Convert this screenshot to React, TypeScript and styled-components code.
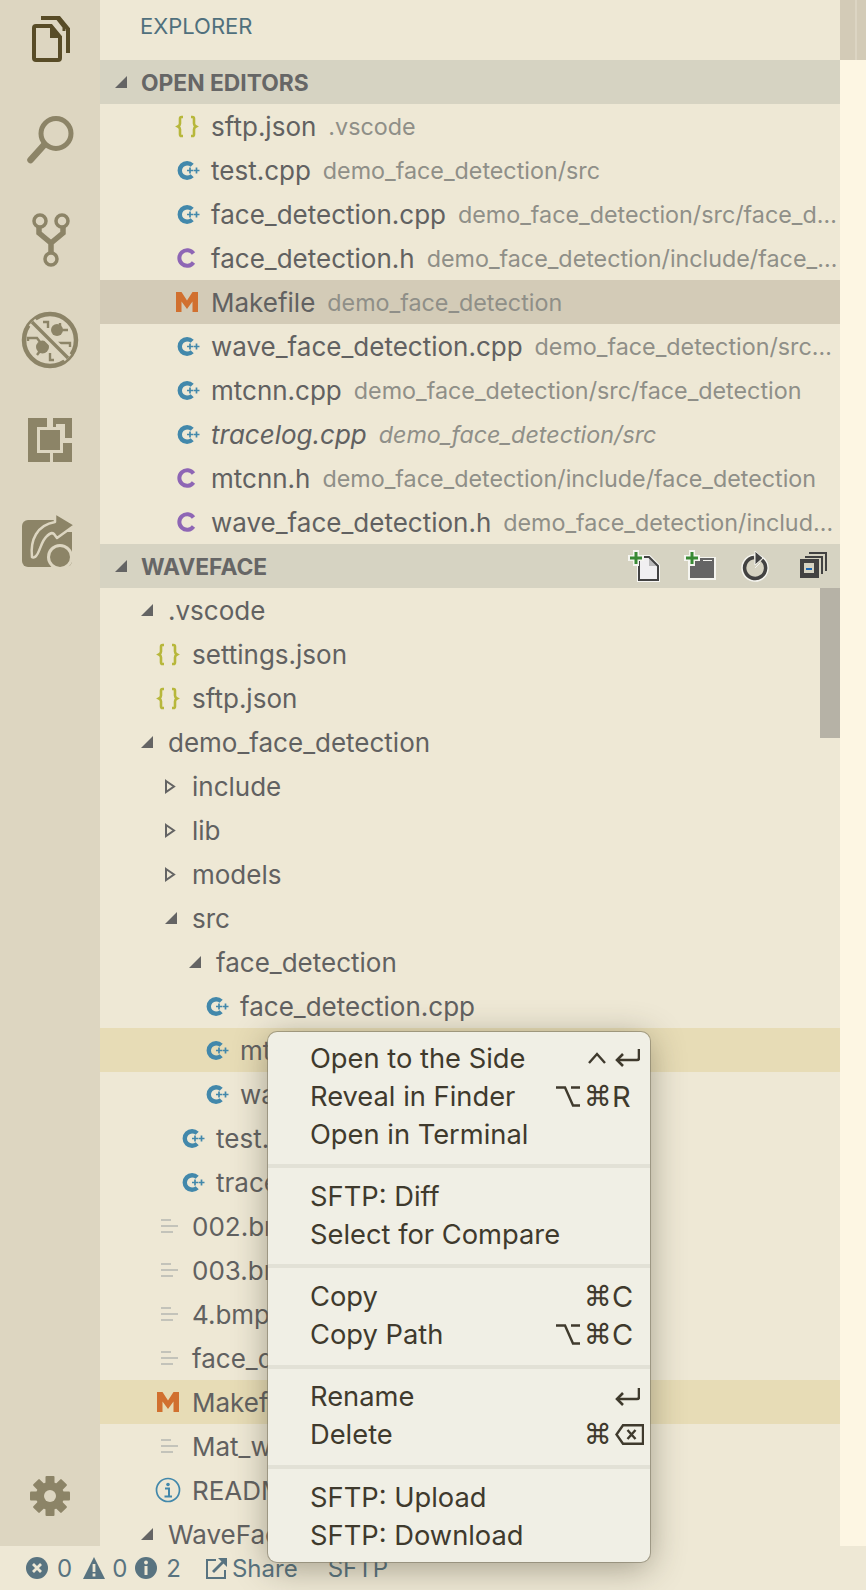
import React from "react";
import styled, { createGlobalStyle } from "styled-components";

const GlobalStyle = createGlobalStyle`
  html, body {
    margin: 0;
    padding: 0;
    background: #fdf6e3;
  }
  body {
    overflow: hidden;
    font-family: Inter, "Liberation Sans", sans-serif;
  }
`;

const Window = styled.div`
  position: relative;
  width: 866px;
  height: 1590px;
  display: flex;
  flex-direction: column;
  overflow: hidden;
`;

const Main = styled.div`
  flex: 1;
  min-height: 0;
  display: flex;
`;

const ActivityBar = styled.nav`
  width: 100px;
  flex-shrink: 0;
  background: #ddd6c1;
  display: flex;
  flex-direction: column;
  align-items: center;
  gap: 20px;
  padding-bottom: 10px;
`;

const ActivityItem = styled.div`
  height: 80px;
  width: 80px;
  svg {
    display: block;
  }
`;

const Spacer = styled.div`
  flex: 1;
`;

const Sidebar = styled.aside`
  position: relative;
  width: 740px;
  flex-shrink: 0;
  background: #eee8d5;
  display: flex;
  flex-direction: column;
  overflow: hidden;
`;

const SidebarTitle = styled.div`
  height: 52px;
  padding: 0 0 8px 40px;
  display: flex;
  align-items: center;
  font-size: 22px;
  color: #50707d;
`;

const SectionHeader = styled.div`
  height: 44px;
  flex-shrink: 0;
  background: #d6d3c2;
  display: flex;
  align-items: center;
  color: #666666;
  font-size: 22.8px;
  font-weight: 700;
  svg {
    flex-shrink: 0;
  }
`;

const SectionName = styled.span`
  flex: 1;
`;

const HeaderAction = styled.div`
  width: 56px;
  height: 44px;
  svg {
    display: block;
  }
`;

const TreeList = styled.div`
  flex: 1;
  min-height: 0;
  overflow: hidden;
`;

const TreeRow = styled.div<{ $indent: number; $tone?: "selected" | "focus" }>`
  height: 44px;
  padding-left: ${(p) => p.$indent}px;
  display: flex;
  align-items: center;
  background: ${(p) =>
    p.$tone === "selected" ? "#d3cbb7" : p.$tone === "focus" ? "#e7dcb6" : "transparent"};
  color: #616161;
  font-size: 26px;
  white-space: nowrap;
`;

const IconSlot = styled.div`
  width: 24px;
  height: 24px;
  flex-shrink: 0;
  margin-right: 12px;
  svg {
    display: block;
    overflow: visible;
  }
`;

const FileName = styled.span<{ $italic?: boolean }>`
  flex-shrink: 0;
  font-style: ${(p) => (p.$italic ? "italic" : "normal")};
`;

const FileDesc = styled.span<{ $italic?: boolean }>`
  margin-left: 12px;
  margin-right: 1px;
  min-width: 0;
  overflow: hidden;
  text-overflow: ellipsis;
  font-size: 23.3px;
  color: #8f8f88;
  font-style: ${(p) => (p.$italic ? "italic" : "normal")};
`;

const Scrollbar = styled.div`
  position: absolute;
  right: 0;
  top: 588px;
  width: 20px;
  height: 150px;
  background: #b6b2a6;
`;

const EditorColumn = styled.div`
  flex: 1;
  background: #fdf6e3;
`;

const TabStrip = styled.div`
  height: 60px;
  background: #d3cbb7;
  display: flex;
  justify-content: flex-end;
  padding-right: 9px;
`;

const TabDivider = styled.div`
  width: 2px;
  background: #dcd5c3;
`;

const StatusBar = styled.footer`
  height: 44px;
  flex-shrink: 0;
  background: #eee8d5;
  display: flex;
  align-items: center;
  padding-left: 26px;
  color: #587380;
  font-size: 24px;
`;

const StatusGroup = styled.div<{ $gap: number; $left?: number }>`
  display: flex;
  align-items: center;
  gap: ${(p) => p.$gap}px;
  margin-left: ${(p) => p.$left ?? 0}px;
  svg {
    display: block;
  }
`;

const ContextMenu = styled.div`
  position: absolute;
  left: 268px;
  top: 1032px;
  width: 382px;
  box-sizing: border-box;
  padding: 7px 0 8px;
  border-radius: 9px;
  background: #f0efe5;
  box-shadow: 0 0 0 1px rgba(120, 115, 95, 0.55), 0 6px 34px rgba(60, 55, 35, 0.42);
  color: #3f3a2d;
  font-size: 27.3px;
`;

const MenuItem = styled.div`
  height: 38px;
  display: grid;
  grid-template-columns: 1fr auto 35px;
  column-gap: 3px;
  align-items: center;
  padding-left: 42px;
  white-space: nowrap;
`;

const MenuLabel = styled.span``;

const MenuMods = styled.span`
  display: flex;
  align-items: center;
  justify-content: flex-end;
  gap: 4px;
  font-size: 28px;
  font-family: "DejaVu Sans", sans-serif;
  svg {
    display: block;
  }
`;

const MenuKey = styled.span`
  display: flex;
  align-items: center;
  svg {
    display: block;
  }
`;

const KeyLetter = styled.span`
  margin-left: -3px;
  font-size: 29px;
`;

const CtrlBox = styled.span`
  margin-right: 6px;
`;

const MenuDivider = styled.div`
  height: 4px;
  margin: 11px 0 9.25px;
  background: #e2e1d6;
`;

const ACTIVITY = "#8c8467";
const ACTIVE = "#584c27";
const BAR = "#ddd6c1";

const FilesIcon = () => (
  <svg width="80" height="80" viewBox="10 0 80 80" fill="none" stroke={ACTIVE} strokeWidth="4">
    <path d="M41 18h18l9 11v24" />
    <path d="M41 18h16l7 9v4" strokeWidth="3" />
    <path d="M36 26h15l9 11v21a2 2 0 0 1-2 2H36a2 2 0 0 1-2-2V28a2 2 0 0 1 2-2z" />
    <path d="M50 25l12 13H50z" fill={ACTIVE} stroke="none" />
  </svg>
);

const SearchIcon = () => (
  <svg width="80" height="80" viewBox="10 100 80 80" fill="none" stroke={ACTIVITY}>
    <circle cx="56" cy="133.500" r="15" strokeWidth="5" />
    <path d="M44 145l-13.500 15" strokeWidth="6.500" strokeLinecap="round" />
  </svg>
);

const GitIcon = () => (
  <svg width="80" height="80" viewBox="10 200 80 80" fill="none" stroke={ACTIVITY}>
    <circle cx="40" cy="221" r="6" strokeWidth="3.500" />
    <circle cx="62" cy="221" r="6" strokeWidth="3.500" />
    <circle cx="51" cy="259" r="6" strokeWidth="3.500" />
    <path d="M39 227v6l12 10 12-10v-6M51 243v10" strokeWidth="5.500" />
  </svg>
);

const DebugIcon = () => (
  <svg width="80" height="80" viewBox="10 300 80 80" fill="none" stroke={ACTIVITY}>
    <circle cx="50" cy="340" r="26" strokeWidth="4.500" />
    <circle cx="42.500" cy="347" r="6.500" fill={ACTIVITY} stroke="none" />
    <circle cx="57" cy="330" r="6" fill={ACTIVITY} stroke="none" />
    <path d="M28 341v-3h9l3 4M37 355l3-4M50 353v7h4M43 322h5v6M60 323v3M62 330h6M58 343h12v4" strokeWidth="2.400" />
    <path d="M32 322l36 36" stroke={BAR} strokeWidth="9" />
    <path d="M32 322l36 36" strokeWidth="3.400" />
  </svg>
);

const ExtensionsIcon = () => (
  <svg width="80" height="80" viewBox="10 400 80 80">
    <rect x="28" y="418" width="44" height="44" fill={ACTIVITY} />
    <rect x="47" y="418" width="6" height="9" fill={BAR} />
    <rect x="37" y="427" width="26" height="26" fill={BAR} />
    <rect x="56" y="424" width="9" height="14" fill={BAR} />
    <rect x="60" y="438" width="12" height="5" fill={BAR} />
    <rect x="50" y="453" width="3" height="9" fill={BAR} />
    <rect x="40" y="430" width="20" height="20" fill={ACTIVITY} />
  </svg>
);

const ShareIcon = () => (
  <svg width="80" height="80" viewBox="10 500 80 80">
    <rect x="22" y="520" width="50" height="47" rx="6" fill={ACTIVITY} />
    <rect x="55" y="515" width="20" height="17" fill={BAR} />
    <path
      d="M32 557C30 540 37 525 55 522V513L75 525 57 538 54 534C52 532 50 533 47 536 41 541 40 552 36 556 35 557 33 558 32 557Z"
      fill={ACTIVITY}
      stroke={BAR}
      strokeWidth="2.500"
      strokeLinejoin="round"
    />
    <circle cx="60" cy="557" r="13" fill={BAR} />
    <circle cx="60" cy="557" r="10" fill={ACTIVITY} />
  </svg>
);

const GearIcon = () => (
  <svg width="80" height="80" viewBox="10 1456 80 80" fill={ACTIVITY}>
    {[0, 45, 90, 135, 180, 225, 270, 315].map((a) => (
      <rect key={a} x="45.500" y="1476" width="9" height="10" rx="1" transform={`rotate(${a} 50 1496)`} />
    ))}
    <circle cx="50" cy="1496" r="14" />
    <circle cx="50" cy="1496" r="6" fill={BAR} />
  </svg>
);

const Twist = ({ open }: { open: boolean }) =>
  open ? (
    <svg width="24" height="24" viewBox="0 0 24 24">
      <path d="M9 18h12V6z" fill="#646464" />
    </svg>
  ) : (
    <svg width="24" height="24" viewBox="0 0 24 24">
      <path d="M10 7l8 5.500-8 5.500z" fill="none" stroke="#646464" strokeWidth="2" />
    </svg>
  );

const CppIcon = () => (
  <svg width="24" height="24" viewBox="0 0 24 24" fill="none" stroke="#4288ab">
    <path d="M17.200 7.300A7.300 7.300 0 1 0 17.200 17.700" strokeWidth="4.400" />
    <path d="M12 12.500h6M15 9.500v6M18.500 12.500h6M21.500 9.500v6" strokeWidth="1.700" />
  </svg>
);

const CIcon = () => (
  <svg width="24" height="24" viewBox="0 0 24 24" fill="none" stroke="#8e66b5">
    <path d="M18.500 7.500A7.800 7.800 0 1 0 18.500 16.500" strokeWidth="4" />
  </svg>
);

const JsonIcon = () => (
  <svg width="24" height="24" viewBox="0 0 24 24" fill="none" stroke="#b7b73b" strokeWidth="2.600">
    <path d="M8 3H6.500C5.500 3 5 3.800 5 4.800V9.500C5 11 4 12 3 12.500 4 13 5 14 5 15.500V20.200C5 21.200 5.500 22 6.500 22H8" />
    <path d="M16 3h1.500C18.500 3 19 3.800 19 4.800V9.500C19 11 20 12 21 12.500 20 13 19 14 19 15.500V20.200C19 21.200 18.500 22 17.500 22H16" />
  </svg>
);

const MakeIcon = () => (
  <svg width="24" height="24" viewBox="0 0 24 24" fill="#d1702f">
    <path d="M1 2h5.500L12 10.500 17.500 2H23v20h-5.500V11.500L12 19 6.500 11.500V22H1z" />
  </svg>
);

const LinesIcon = () => (
  <svg width="24" height="24" viewBox="0 0 24 24" fill="none" stroke="#c3c3ba" strokeWidth="2.200">
    <path d="M5 6h10M5 12h17M5 18h12" />
  </svg>
);

const InfoIcon = () => (
  <svg width="24" height="24" viewBox="0 0 24 24" fill="none" stroke="#4288ab">
    <circle cx="12" cy="12" r="11.500" strokeWidth="1.700" />
    <path d="M9 10.500h4v7.500M8.500 18.500h7.500" strokeWidth="2" />
    <circle cx="12" cy="6.500" r="1.800" fill="#4288ab" stroke="none" />
  </svg>
);

type FileKind = "cpp" | "c" | "json" | "make" | "lines" | "info";

const FILE_ICONS: Record<FileKind, () => React.JSX.Element> = {
  cpp: CppIcon,
  c: CIcon,
  json: JsonIcon,
  make: MakeIcon,
  lines: LinesIcon,
  info: InfoIcon,
};

const HeaderTwist = () => (
  <svg width="41" height="24" viewBox="0 0 41 24">
    <path d="M15 18h12V6z" fill="#646464" />
  </svg>
);

const NewFileIcon = () => (
  <svg width="56" height="44" viewBox="616 544 56 44">
    <path d="M637 555h13l10 10v17h-23z" fill="#fff" opacity="0.8" />
    <path d="M639 557h10l9 9v14h-19z" fill="#f0eff1" stroke="#424242" strokeWidth="2" />
    <path d="M649 557v9h9z" fill="#424242" opacity="0.3" />
    <path d="M633 550h6v5h5v6h-5v5h-6v-5h-5v-6h5z" fill="#f5f5f0" />
    <path d="M634.500 552h3v4.500h4.500v3h-4.500v4.500h-3v-4.500h-4.500v-3h4.500z" fill="#388a34" />
  </svg>
);

const NewFolderIcon = () => (
  <svg width="56" height="44" viewBox="672 544 56 44">
    <path d="M688 557h28v23h-28z" fill="#f5f5f0" />
    <path d="M690 560h6l2-2h16v20h-24z" fill="#656565" />
    <path d="M703 560h9v1h-9z" fill="#f5f5f0" />
    <path d="M689 550h6v5h5v6h-5v5h-6v-5h-5v-6h5z" fill="#f5f5f0" />
    <path d="M690.500 552h3v4.500h4.500v3h-4.500v4.500h-3v-4.500h-4.500v-3h4.500z" fill="#388a34" />
  </svg>
);

const RefreshIcon = () => (
  <svg width="56" height="44" viewBox="728 544 56 44" fill="none">
    <circle cx="755" cy="568" r="13" stroke="#f5f5f0" strokeWidth="1.500" />
    <path d="M762 560a10.500 10.500 0 1 1-8-2.500" stroke="#424242" strokeWidth="3.500" />
    <path d="M755 551l8 7-8 7z" fill="#424242" stroke="#f5f5f0" strokeWidth="1" />
    <path d="M755 568l5-5" stroke="#f5f5f0" strokeWidth="1" />
  </svg>
);

const CollapseIcon = () => (
  <svg width="56" height="44" viewBox="784 544 56 44" fill="none" stroke="#424242">
    <path d="M809 553h17v18" strokeWidth="2" />
    <path d="M805 557h17v17" strokeWidth="2" />
    <rect x="800" y="559" width="19" height="19" fill="#424242" stroke="none" />
    <rect x="804" y="563" width="10" height="10" fill="#d6d3c2" stroke="none" />
    <rect x="806" y="568" width="6" height="2" fill="#1a66b3" stroke="none" />
  </svg>
);

const STATUS = "#587380";

const ErrorIcon = () => (
  <svg width="22" height="22" viewBox="0 0 22 22">
    <circle cx="11" cy="11" r="11" fill={STATUS} />
    <path d="M7 7l8 8M15 7l-8 8" stroke="#eee8d5" strokeWidth="2.800" />
  </svg>
);

const WarningIcon = () => (
  <svg width="22" height="22" viewBox="0 0 22 22">
    <path d="M11 0L22 22H0z" fill={STATUS} />
    <path d="M11 7v8M11 16.500v3" stroke="#eee8d5" strokeWidth="2.800" />
  </svg>
);

const NoticeIcon = () => (
  <svg width="22" height="22" viewBox="0 0 22 22">
    <circle cx="11" cy="11" r="11" fill={STATUS} />
    <path d="M11 9v9" stroke="#eee8d5" strokeWidth="3" />
    <circle cx="11" cy="5.500" r="1.900" fill="#eee8d5" />
  </svg>
);

const ExternalIcon = () => (
  <svg width="22" height="22" viewBox="0 0 22 22" fill="none" stroke={STATUS} strokeWidth="2">
    <path d="M10 3H1v18h18v-8" />
    <path d="M7 15L18 4" strokeWidth="2.800" />
    <path d="M12 1h9v9z" fill={STATUS} stroke="none" />
  </svg>
);

const INK = "#3f3a2d";

const CtrlGlyph = () => (
  <CtrlBox>
    <svg width="18" height="12" viewBox="0 0 18 12" fill="none" stroke={INK} strokeWidth="2.400">
      <path d="M1 11l8-9 8 9" />
    </svg>
  </CtrlBox>
);

const OptGlyph = () => (
  <svg width="24" height="21" viewBox="0 0 24 21" fill="none" stroke={INK} strokeWidth="2.400">
    <path d="M0 1.500h9l8 18h7M15 1.500h9" />
  </svg>
);

const EnterGlyph = () => (
  <svg width="25" height="18" viewBox="0 0 25 18" fill="none" stroke={INK} strokeWidth="2.600">
    <path d="M24 0v9a2 2 0 0 1-2 2H3" />
    <path d="M8 5l-6 6 6 6" />
  </svg>
);

const DeleteGlyph = () => (
  <svg width="29" height="21" viewBox="0 0 29 21" fill="none" stroke={INK} strokeWidth="2.400">
    <path d="M8 1.200h20v18.600H8L1.500 10.500z" />
    <path d="M12.500 6l8 9M20.500 6l-8 9" />
  </svg>
);

type Row = {
  name: string;
  desc?: string;
  kind?: FileKind;
  open?: boolean;
  depth: number;
  italic?: boolean;
  tone?: "selected" | "focus";
};

const openEditors: Row[] = [
  { name: "sftp.json", desc: ".vscode", kind: "json", depth: 0 },
  { name: "test.cpp", desc: "demo_face_detection/src", kind: "cpp", depth: 0 },
  { name: "face_detection.cpp", desc: "demo_face_detection/src/face_detection", kind: "cpp", depth: 0 },
  { name: "face_detection.h", desc: "demo_face_detection/include/face_detection", kind: "c", depth: 0 },
  { name: "Makefile", desc: "demo_face_detection", kind: "make", depth: 0, tone: "selected" },
  { name: "wave_face_detection.cpp", desc: "demo_face_detection/src/face_detection", kind: "cpp", depth: 0 },
  { name: "mtcnn.cpp", desc: "demo_face_detection/src/face_detection", kind: "cpp", depth: 0 },
  { name: "tracelog.cpp", desc: "demo_face_detection/src", kind: "cpp", depth: 0, italic: true },
  { name: "mtcnn.h", desc: "demo_face_detection/include/face_detection", kind: "c", depth: 0 },
  { name: "wave_face_detection.h", desc: "demo_face_detection/include/face_detection", kind: "c", depth: 0 },
];

const tree: Row[] = [
  { name: ".vscode", open: true, depth: 0 },
  { name: "settings.json", kind: "json", depth: 1 },
  { name: "sftp.json", kind: "json", depth: 1 },
  { name: "demo_face_detection", open: true, depth: 0 },
  { name: "include", open: false, depth: 1 },
  { name: "lib", open: false, depth: 1 },
  { name: "models", open: false, depth: 1 },
  { name: "src", open: true, depth: 1 },
  { name: "face_detection", open: true, depth: 2 },
  { name: "face_detection.cpp", kind: "cpp", depth: 3 },
  { name: "mtcnn.cpp", kind: "cpp", depth: 3, tone: "focus" },
  { name: "wave_face_detection.cpp", kind: "cpp", depth: 3 },
  { name: "test.cpp", kind: "cpp", depth: 2 },
  { name: "tracelog.cpp", kind: "cpp", depth: 2 },
  { name: "002.bmp", kind: "lines", depth: 1 },
  { name: "003.bmp", kind: "lines", depth: 1 },
  { name: "4.bmp", kind: "lines", depth: 1 },
  { name: "face_detection.txt", kind: "lines", depth: 1 },
  { name: "Makefile", kind: "make", depth: 1, tone: "focus" },
  { name: "Mat_wave_face.txt", kind: "lines", depth: 1 },
  { name: "README.md", kind: "info", depth: 1 },
  { name: "WaveFace", open: true, depth: 0 },
];

type MenuEntry = { label: string; mods?: React.ReactNode; key_?: React.ReactNode };

const menuGroups: MenuEntry[][] = [
  [
    { label: "Open to the Side", mods: <CtrlGlyph />, key_: <EnterGlyph /> },
    { label: "Reveal in Finder", mods: <><OptGlyph />⌘</>, key_: <KeyLetter>R</KeyLetter> },
    { label: "Open in Terminal" },
  ],
  [{ label: "SFTP: Diff" }, { label: "Select for Compare" }],
  [
    { label: "Copy", mods: "⌘", key_: <KeyLetter>C</KeyLetter> },
    { label: "Copy Path", mods: <><OptGlyph />⌘</>, key_: <KeyLetter>C</KeyLetter> },
  ],
  [
    { label: "Rename", key_: <EnterGlyph /> },
    { label: "Delete", mods: "⌘", key_: <DeleteGlyph /> },
  ],
  [{ label: "SFTP: Upload" }, { label: "SFTP: Download" }],
];

const FileRow = ({ row, base }: { row: Row; base: number }) => {
  const Icon = row.kind ? FILE_ICONS[row.kind] : null;
  return (
    <TreeRow $indent={base + (row.depth - 1) * 24} $tone={row.tone}>
      <IconSlot>{Icon ? <Icon /> : <Twist open={!!row.open} />}</IconSlot>
      <FileName $italic={row.italic}>{row.name}</FileName>
      {row.desc && <FileDesc $italic={row.italic}>{row.desc}</FileDesc>}
    </TreeRow>
  );
};

const App = () => {
  return (
    <Window>
      <GlobalStyle />
      <Main>
        <ActivityBar>
          <ActivityItem><FilesIcon /></ActivityItem>
          <ActivityItem><SearchIcon /></ActivityItem>
          <ActivityItem><GitIcon /></ActivityItem>
          <ActivityItem><DebugIcon /></ActivityItem>
          <ActivityItem><ExtensionsIcon /></ActivityItem>
          <ActivityItem><ShareIcon /></ActivityItem>
          <Spacer />
          <ActivityItem><GearIcon /></ActivityItem>
        </ActivityBar>
        <Sidebar>
          <SidebarTitle>EXPLORER</SidebarTitle>
          <SectionHeader>
            <HeaderTwist />
            <SectionName>OPEN EDITORS</SectionName>
          </SectionHeader>
          <div>
            {openEditors.map((row) => (
              <FileRow key={row.name} row={row} base={99} />
            ))}
          </div>
          <SectionHeader>
            <HeaderTwist />
            <SectionName>WAVEFACE</SectionName>
            <HeaderAction><NewFileIcon /></HeaderAction>
            <HeaderAction><NewFolderIcon /></HeaderAction>
            <HeaderAction><RefreshIcon /></HeaderAction>
            <HeaderAction><CollapseIcon /></HeaderAction>
          </SectionHeader>
          <TreeList>
            {tree.map((row) => (
              <FileRow key={row.name + row.depth} row={row} base={56} />
            ))}
          </TreeList>
          <Scrollbar />
        </Sidebar>
        <EditorColumn>
          <TabStrip>
            <TabDivider />
          </TabStrip>
        </EditorColumn>
      </Main>
      <StatusBar>
        <StatusGroup $gap={9}><ErrorIcon />0</StatusGroup>
        <StatusGroup $gap={7} $left={11}><WarningIcon />0</StatusGroup>
        <StatusGroup $gap={9} $left={8}><NoticeIcon />2</StatusGroup>
        <StatusGroup $gap={4} $left={25}><ExternalIcon />Share</StatusGroup>
        <StatusGroup $gap={0} $left={30}>SFTP</StatusGroup>
      </StatusBar>
      <ContextMenu>
        {menuGroups.map((group, i) => (
          <React.Fragment key={i}>
            {i > 0 && <MenuDivider />}
            {group.map((item) => (
              <MenuItem key={item.label}>
                <MenuLabel>{item.label}</MenuLabel>
                <MenuMods>{item.mods}</MenuMods>
                <MenuKey>{item.key_}</MenuKey>
              </MenuItem>
            ))}
          </React.Fragment>
        ))}
      </ContextMenu>
    </Window>
  );
};

export default App;
